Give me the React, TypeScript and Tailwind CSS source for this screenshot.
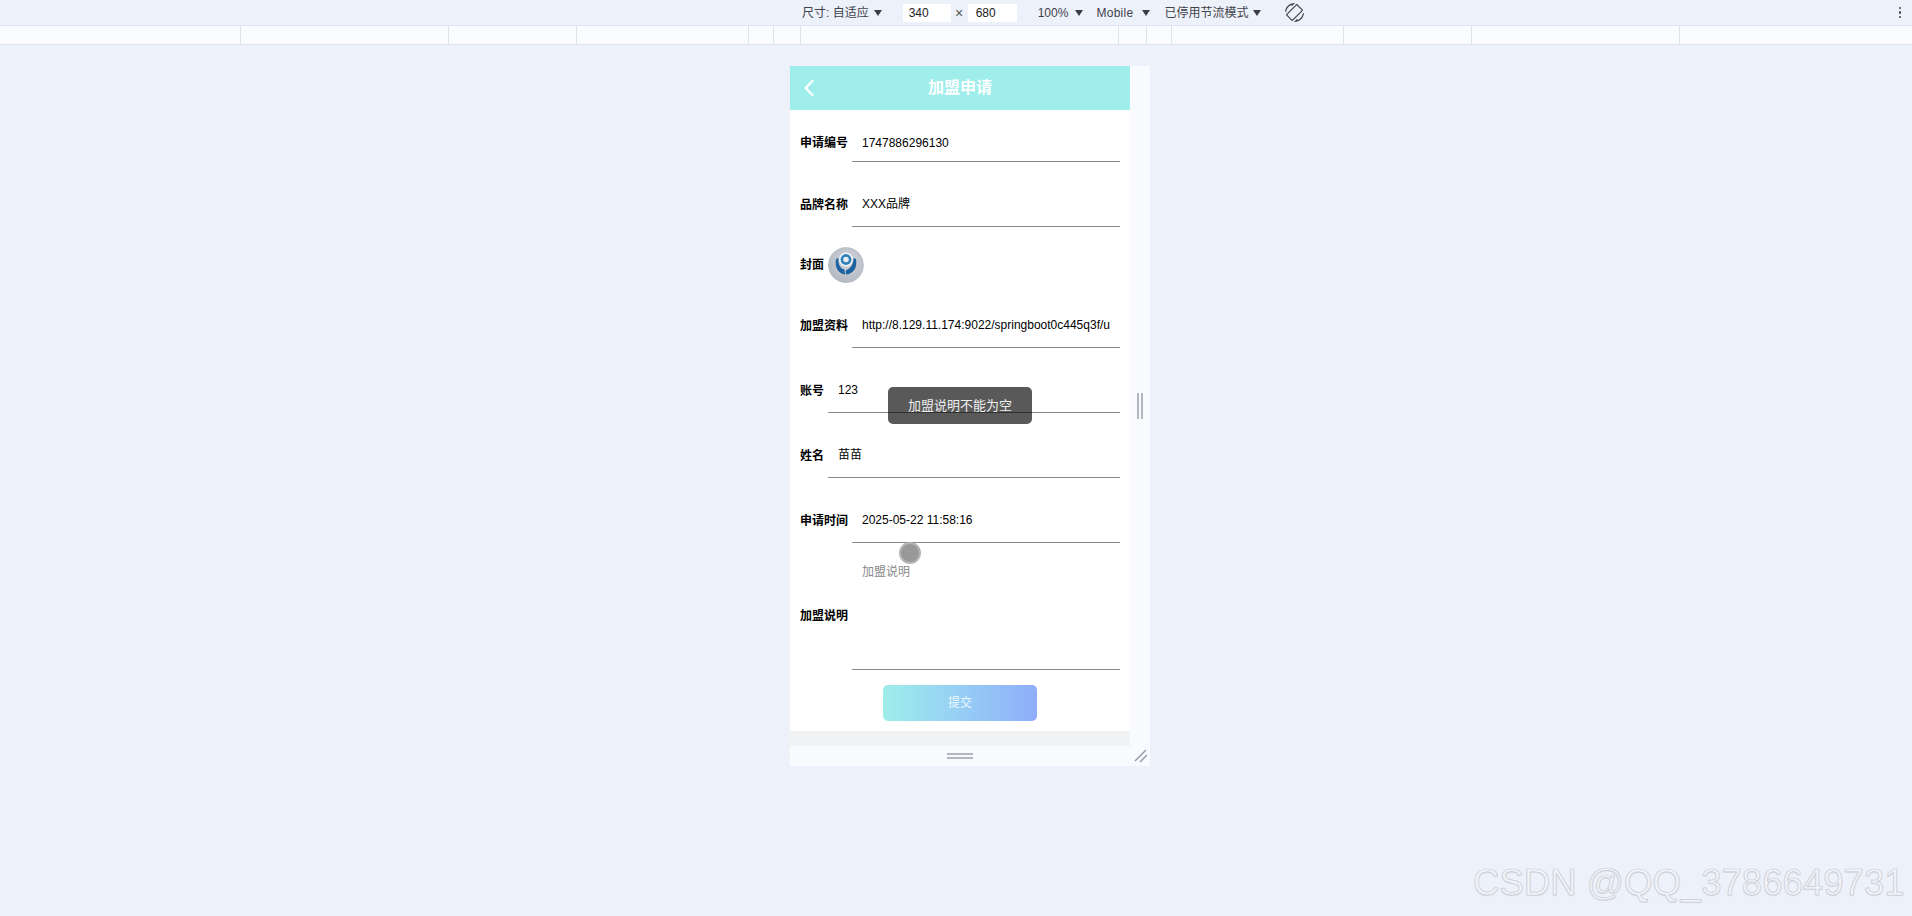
import { ChevronLeft } from "lucide-react"

const font = "font-['Liberation_Sans','Noto_Sans_CJK_SC',sans-serif]"
const rulerStops = [241, 208, 128, 172, 25, 27, 318, 28, 25, 172, 128, 208, 232]

function Caret({ gap = "ml-[7px]" }: { gap?: string }) {
  return (
    <svg width="8" height="6" viewBox="0 0 8 6" className={`${gap} shrink-0`}>
      <path d="M0 0h8L4 6z" fill="#3a3d45" />
    </svg>
  )
}

function RotateIcon() {
  return (
    <svg width="19" height="19" viewBox="0 0 24 24" fill="#3c4048">
      <g transform="translate(24 0) scale(-1 1)">
        <path d="M16.48 2.52c3.27 1.55 5.61 4.72 5.97 8.48h1.5C23.44 4.84 18.29 0 12 0l-.66.03 3.81 3.81 1.33-1.32zm-6.25-.77c-.59-.59-1.54-.59-2.12 0L1.75 8.11c-.59.59-.59 1.54 0 2.12l12.02 12.02c.59.59 1.54.59 2.12 0l6.36-6.36c.59-.59.59-1.54 0-2.12L10.23 1.75zm4.6 19.44L2.81 9.17l6.36-6.36 12.02 12.02-6.36 6.36zm-7.31.29C4.25 19.94 1.91 16.76 1.55 13H.05C.56 19.16 5.71 24 12 24l.66-.03-3.81-3.81-1.33 1.32z" />
      </g>
    </svg>
  )
}

function Toolbar() {
  return (
    <div className="flex h-[25px] items-center text-xs text-[#3f434b]">
      <span className="ml-[802px]">尺寸: 自适应</span>
      <Caret gap="ml-[5px]" />
      <span className="ml-[21px] h-[18px] w-[48px] bg-white pl-[6px] leading-[18px] text-[#222]">340</span>
      <span className="w-[17px] text-center text-sm text-[#555]">×</span>
      <span className="h-[18px] w-[49px] bg-white pl-[8px] leading-[18px] text-[#222]">680</span>
      <span className="ml-[21px]">100%</span>
      <Caret />
      <span className="ml-[13px] tracking-[0.3px]">Mobile</span>
      <Caret gap="ml-[8px]" />
      <span className="ml-[15px]">已停用节流模式</span>
      <Caret gap="ml-[4px]" />
      <span className="ml-[24px]">
        <RotateIcon />
      </span>
      <span className="ml-auto mr-[11px] flex flex-col gap-[2px]">
        <i className="size-[2.5px] rounded-full bg-[#3f434b]" />
        <i className="size-[2.5px] rounded-full bg-[#3f434b]" />
        <i className="size-[2.5px] rounded-full bg-[#3f434b]" />
      </span>
    </div>
  )
}

function Ruler() {
  return (
    <div className="flex h-5 border-y border-[#dfe3ee] bg-[#fafbff]">
      {rulerStops.map((w, i) => (
        <div
          key={i}
          className="h-full border-r border-[#dfe3ee] last:border-r-0"
          style={{ width: w }}
        />
      ))}
    </div>
  )
}

function Field({
  label,
  value,
  first,
  wide = true,
}: {
  label: string
  value: string
  first?: boolean
  wide?: boolean
}) {
  return (
    <div className={first ? "flex items-center" : "mt-[21px] flex items-center"}>
      <span className={wide ? "mr-1 w-12 font-bold" : "mr-1 w-6 font-bold"}>{label}</span>
      <div
        className={
          first
            ? "flex h-[38px] flex-1 items-center overflow-hidden border-b border-[#888] pl-[10px] whitespace-nowrap"
            : "flex h-11 flex-1 items-center overflow-hidden border-b border-[#888] pb-[2px] pl-[10px] whitespace-nowrap"
        }
      >
        {value}
      </div>
    </div>
  )
}

function CoverLogo() {
  return (
    <svg width="36" height="36" viewBox="0 0 36 36" className="rounded-full">
      <defs>
        <radialGradient id="ball" cx="55%" cy="40%" r="65%">
          <stop offset="0%" stopColor="#d5d7dc" />
          <stop offset="100%" stopColor="#b0b5c0" />
        </radialGradient>
      </defs>
      <circle cx="18" cy="18" r="18" fill="url(#ball)" />
      <path d="M8 12c-1.5 8 2 14.500 9 15.500l-.5-5C12 21.500 10 17 10.500 11z" fill="#1d639f" />
      <path d="M28 12c1.500 8-2 14.500-9.500 15.500-1 0-1-3-.3-4.500C22.500 22 25.500 17 25.500 11z" fill="#1d639f" />
      <circle cx="18" cy="12.500" r="7" fill="#eef1f5" />
      <circle cx="18" cy="12.500" r="5.400" fill="#2f80b8" />
      <circle cx="18" cy="12.500" r="2.800" fill="#e6ebf0" />
    </svg>
  )
}

function Phone() {
  return (
    <div className="relative flex h-[680px] w-[340px] flex-col bg-white text-xs text-black">
      <header className="relative flex h-11 shrink-0 items-center justify-center bg-[#9feeeb] text-base font-bold text-white">
        <ChevronLeft className="absolute left-[5px] size-[28px]" strokeWidth={2} />
        加盟申请
      </header>

      <form className="px-2.5 pt-[14px]">
        <Field first label="申请编号" value="1747886296130" />
        <Field label="品牌名称" value="XXX品牌" />
        <div className="mt-5 flex items-center">
          <span className="mr-1 w-6 font-bold">封面</span>
          <CoverLogo />
        </div>
        <Field label="加盟资料" value="http://8.129.11.174:9022/springboot0c445q3f/u" />
        <Field wide={false} label="账号" value="123" />
        <Field wide={false} label="姓名" value="苗苗" />
        <Field label="申请时间" value="2025-05-22 11:58:16" />
        <div className="mt-[21px] flex items-center">
          <span className="mr-1 w-12 pb-[2px] font-bold">加盟说明</span>
          <div className="h-[106px] flex-1 border-b border-[#888] pl-[10px] leading-4 text-[#888]">
            加盟说明
          </div>
        </div>
        <div className="mt-[15px] flex justify-center">
          <button
            type="button"
            className="h-9 w-[154px] rounded-[5px] bg-gradient-to-r from-[#9eeeea] to-[#8fadfb] text-xs text-white/80"
          >
            提交
          </button>
        </div>
      </form>

      <div className="mt-auto h-[15px] bg-[#f1f2f4]" />

      <div className="absolute left-[98px] top-[321px] flex h-[37px] w-36 items-center justify-center rounded-[5px] bg-black/65 text-[13px] text-[#eee]">
        加盟说明不能为空
      </div>
      <div className="absolute left-[109px] top-[476px] size-[22px] rounded-full border-2 border-[#b4b4b4] bg-[#999]" />
    </div>
  )
}

export default function App() {
  return (
    <div className={`relative h-[916px] w-full overflow-hidden bg-[#edf1fa] ${font}`}>
      <Toolbar />
      <Ruler />
      <div className="ml-[790px] mt-[21px] grid w-[360px] grid-cols-[340px_20px] grid-rows-[680px_20px] bg-[#f9fafe]">
        <Phone />
        <div className="flex items-center justify-center gap-[2px]">
          <i className="h-[26px] w-[2px] bg-[#b3b6bd]" />
          <i className="h-[26px] w-[2px] bg-[#b3b6bd]" />
        </div>
        <div className="flex flex-col items-center justify-center gap-[1.5px]">
          <i className="h-[2px] w-[26px] bg-[#b3b6bd]" />
          <i className="h-[2px] w-[26px] bg-[#b3b6bd]" />
        </div>
        <svg width="20" height="20" viewBox="0 0 20 20" stroke="#9a9da5" strokeWidth="1.5">
          <path d="M5 15L16 4M10 16L17 9" />
        </svg>
      </div>
      <div className="absolute left-[1473px] top-[860px] whitespace-nowrap text-[36.6px] leading-[46px] text-[#f0f3f9] [-webkit-text-stroke:0.7px_#c9ccd3] [text-shadow:0_1px_1px_#d5d8df]">
        CSDN @QQ_3786649731
      </div>
    </div>
  )
}
